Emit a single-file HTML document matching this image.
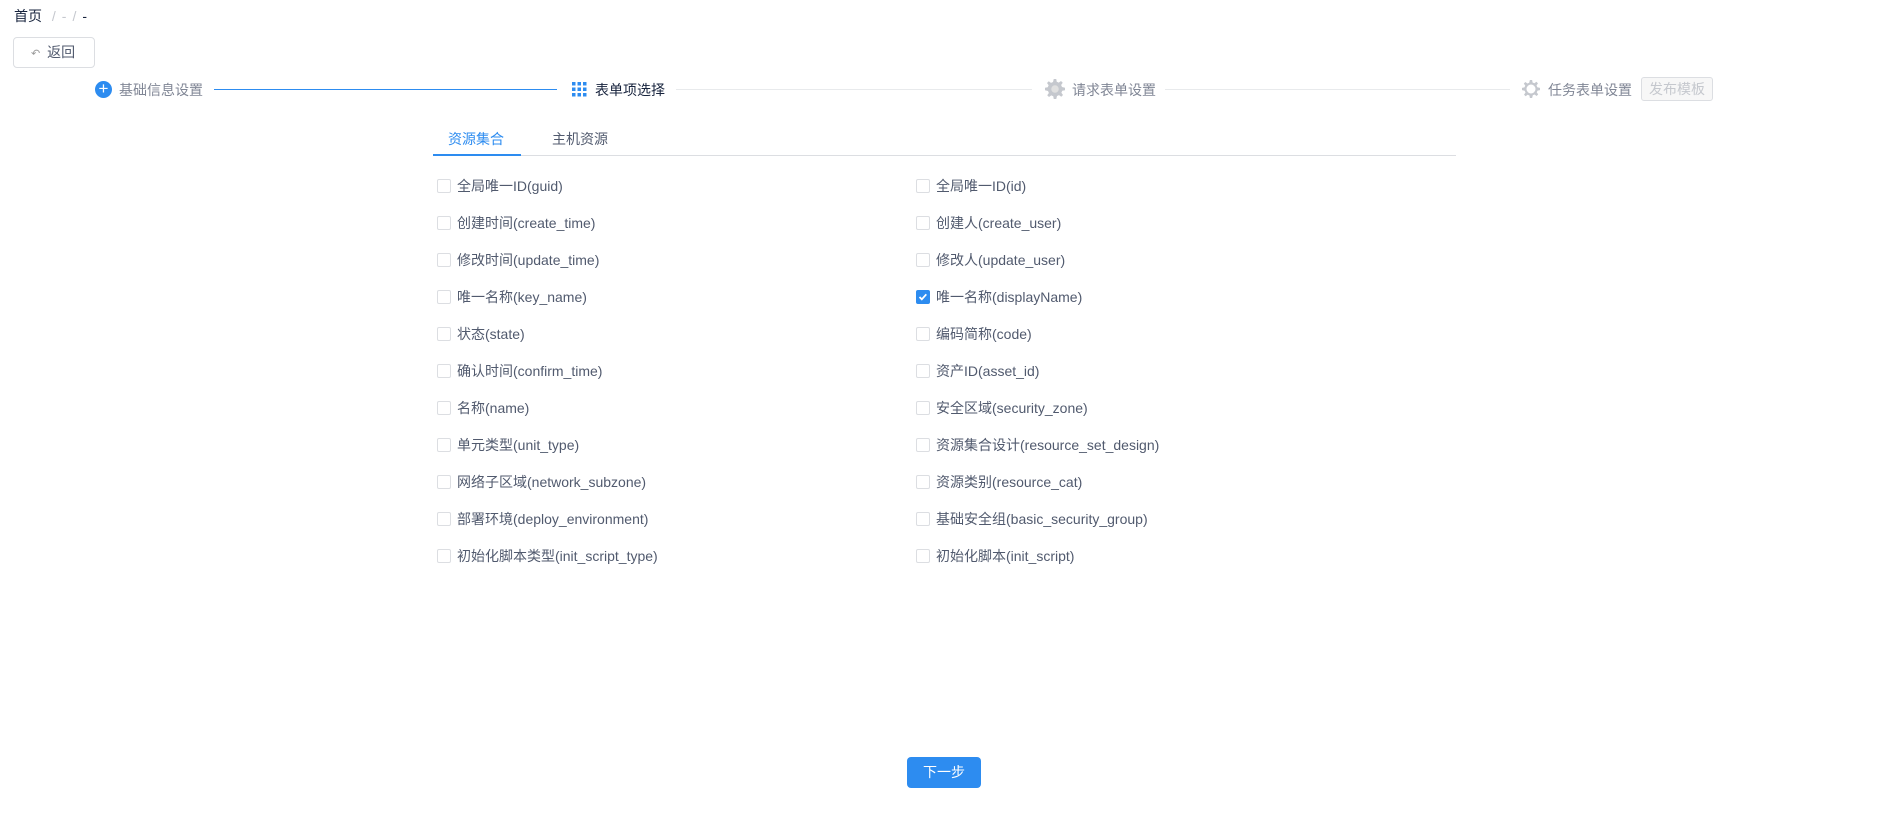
<!DOCTYPE html><html><head><meta charset="utf-8"><style>
body{margin:0;width:1882px;height:814px;background:#fff;font-family:"Liberation Sans","Noto Sans CJK SC",sans-serif;color:#515a6e;font-size:14px;position:relative;overflow:hidden}
.a{position:absolute;white-space:nowrap}
.cb{position:absolute;width:14px;height:14px;border:1px solid #dcdee2;border-radius:2px;background:#fff;box-sizing:border-box}
.cb.on{background:#2d8cf0;border-color:#2d8cf0}
.lb{position:absolute;line-height:16px}
</style></head><body>
<div class="a" style="left:14px;top:6px;color:#17233d">首页 <span style="color:#c5c8ce;margin:0 6px">/</span><span style="color:#c5c8ce">-</span><span style="color:#c5c8ce;margin:0 6px">/</span><span style="color:#17233d">-</span></div>
<div class="a" style="left:13px;top:37px;width:82px;height:31px;border:1px solid #dcdee2;border-radius:4px;box-sizing:border-box;line-height:29px;color:#515a6e"><span style="font-size:11px;color:#999;margin-left:17px">↶</span> <span style="margin-left:3px">返回</span></div>
<!-- steps -->
<div class="a" style="left:95px;top:81px;width:17px;height:17px;border-radius:50%;background:#2d8cf0;color:#fff;font-size:17px;line-height:16px;text-align:center">+</div>
<div class="a" style="left:119px;top:80px;color:#808695">基础信息设置</div>
<div class="a" style="left:214px;top:89px;width:343px;height:1px;background:#2d8cf0"></div>
<svg class="a" style="left:572px;top:82px" width="15" height="15"><g fill="#2d8cf0"><rect x="0" y="0" width="3.5" height="3.5"/><rect x="5.5" y="0" width="3.5" height="3.5"/><rect x="11" y="0" width="3.5" height="3.5"/><rect x="0" y="5.5" width="3.5" height="3.5"/><rect x="5.5" y="5.5" width="3.5" height="3.5"/><rect x="11" y="5.5" width="3.5" height="3.5"/><rect x="0" y="11" width="3.5" height="3.5"/><rect x="5.5" y="11" width="3.5" height="3.5"/><rect x="11" y="11" width="3.5" height="3.5"/></g></svg>
<div class="a" style="left:595px;top:80px;color:#17233d">表单项选择</div>
<div class="a" style="left:676px;top:89px;width:356px;height:1px;background:#e8eaec"></div>
<svg class="a" style="left:1045px;top:79px" width="20" height="20" viewBox="0 0 16 16"><path fill="#c5c8ce" d="M7 0h2l.4 2.2 1.6.7 1.8-1.3 1.4 1.4-1.3 1.8.7 1.6L16 7v2l-2.2.4-.7 1.6 1.3 1.8-1.4 1.4-1.8-1.3-1.6.7L9 16H7l-.4-2.2-1.6-.7-1.8 1.3-1.4-1.4 1.3-1.8-.7-1.6L0 9V7l2.2-.4.7-1.6-1.3-1.8 1.4-1.4 1.8 1.3 1.6-.7z"/><circle cx="8" cy="8" r="3" fill="#e0e0e0"/></svg>
<div class="a" style="left:1072px;top:80px;color:#808695">请求表单设置</div>
<div class="a" style="left:1165px;top:89px;width:345px;height:1px;background:#e8eaec"></div>
<svg class="a" style="left:1522px;top:80px" width="18" height="18" viewBox="0 0 16 16"><path fill="#c5c8ce" d="M7 0h2l.4 2.2 1.6.7 1.8-1.3 1.4 1.4-1.3 1.8.7 1.6L16 7v2l-2.2.4-.7 1.6 1.3 1.8-1.4 1.4-1.8-1.3-1.6.7L9 16H7l-.4-2.2-1.6-.7-1.8 1.3-1.4-1.4 1.3-1.8-.7-1.6L0 9V7l2.2-.4.7-1.6-1.3-1.8 1.4-1.4 1.8 1.3 1.6-.7z"/><circle cx="8" cy="8" r="4" fill="#fff"/></svg>
<div class="a" style="left:1548px;top:80px;color:#808695">任务表单设置</div>
<div class="a" style="left:1641px;top:77px;width:72px;height:24px;border:1px solid #dcdee2;background:#f7f7f7;border-radius:3px;box-sizing:border-box;color:#c5c8ce;font-size:14px;line-height:22px;text-align:center">发布模板</div>
<!-- tabs -->
<div class="a" style="left:448px;top:129px;color:#2d8cf0">资源集合</div>
<div class="a" style="left:552px;top:129px;color:#515a6e">主机资源</div>
<div class="a" style="left:433px;top:155px;width:1023px;height:1px;background:#dcdee2"></div>
<div class="a" style="left:433px;top:154px;width:88px;height:2px;background:#2d8cf0"></div>
<div id="rows"></div>
<div class="a" style="left:907px;top:757px;width:74px;height:31px;background:#2d8cf0;border-radius:4px;color:#fff;text-align:center;line-height:31px">下一步</div>
<script>
var L=["全局唯一ID(guid)","创建时间(create_time)","修改时间(update_time)","唯一名称(key_name)","状态(state)","确认时间(confirm_time)","名称(name)","单元类型(unit_type)","网络子区域(network_subzone)","部署环境(deploy_environment)","初始化脚本类型(init_script_type)"];
var R=["全局唯一ID(id)","创建人(create_user)","修改人(update_user)","唯一名称(displayName)","编码简称(code)","资产ID(asset_id)","安全区域(security_zone)","资源集合设计(resource_set_design)","资源类别(resource_cat)","基础安全组(basic_security_group)","初始化脚本(init_script)"];
var h="";
for(var i=0;i<11;i++){var y=186+i*37.0;
h+='<div class="cb" style="left:437px;top:'+(y-7)+'px"></div><div class="lb" style="left:457px;top:'+(y-8)+'px">'+L[i]+'</div>';
var on=i==3;
h+='<div class="cb'+(on?' on':'')+'" style="left:916px;top:'+(y-7)+'px">'+(on?'<svg width="14" height="14" style="position:absolute;left:-1px;top:-1px"><path d="M3.5 7l2.3 2.3 4.5-5" stroke="#fff" stroke-width="1.8" fill="none"/></svg>':'')+'</div><div class="lb" style="left:936px;top:'+(y-8)+'px">'+R[i]+'</div>';}
document.getElementById("rows").innerHTML=h;
</script>
</body></html>
